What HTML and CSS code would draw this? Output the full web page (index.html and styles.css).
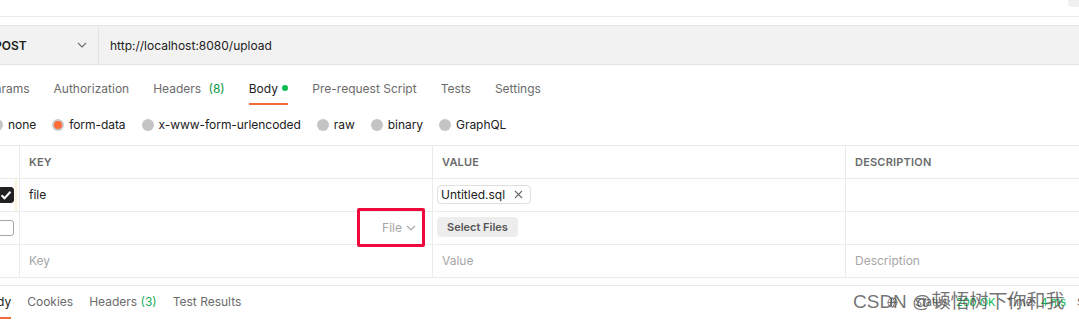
FILE: index.html
```html
<!DOCTYPE html>
<html>
<head>
<meta charset="utf-8">
<link rel="stylesheet" href="styles.css">
</head>
<body>
<div class="page">
  <div class="topbar"><span class="corner"></span></div>

  <div class="urlbar">
    <div class="method">
      <span class="method-name">POST</span>
      <svg class="chev" width="10" height="6" viewBox="0 0 10 6"><path d="M1 1l4 4 4-4" fill="none" stroke="#6b6b6b" stroke-width="1.1"/></svg>
    </div>
    <div class="url">http://localhost:8080/upload</div>
  </div>

  <div class="tabs">
    <span class="tab">Params</span>
    <span class="tab">Authorization</span>
    <span class="tab">Headers <span class="count">(8)</span></span>
    <span class="tab active">Body <span class="dot"></span></span>
    <span class="tab">Pre-request Script</span>
    <span class="tab">Tests</span>
    <span class="tab">Settings</span>
  </div>

  <div class="radios">
    <span class="opt"><span class="radio"></span>none</span>
    <span class="opt"><span class="radio on"></span>form-data</span>
    <span class="opt"><span class="radio"></span>x-www-form-urlencoded</span>
    <span class="opt"><span class="radio"></span>raw</span>
    <span class="opt"><span class="radio"></span>binary</span>
    <span class="opt"><span class="radio"></span>GraphQL</span>
  </div>

  <div class="table">
    <div class="row head">
      <div class="cell chk"></div>
      <div class="cell">KEY</div>
      <div class="cell">VALUE</div>
      <div class="cell last">DESCRIPTION</div>
    </div>
    <div class="row">
      <div class="cell chk marked"><span class="box checked"><svg width="12" height="10" viewBox="0 0 12 10"><path d="M1.5 5.2l3 3 6-6.4" fill="none" stroke="#fff" stroke-width="2"/></svg></span></div>
      <div class="cell text">file</div>
      <div class="cell"><span class="chip">Untitled.sql <svg class="x" width="9" height="9" viewBox="0 0 9 9"><path d="M1 1l7 7M8 1l-7 7" stroke="#6b6b6b" stroke-width="1.1"/></svg></span></div>
      <div class="cell last"></div>
    </div>
    <div class="row">
      <div class="cell chk"><span class="box"></span></div>
      <div class="cell typecell">
        <span class="type">File <svg width="10" height="6" viewBox="0 0 10 6"><path d="M1 1l4 4 4-4" fill="none" stroke="#a6a6a6" stroke-width="1.1"/></svg></span>
        <span class="annot"></span>
      </div>
      <div class="cell"><span class="btn">Select Files</span></div>
      <div class="cell last"></div>
    </div>
    <div class="row">
      <div class="cell chk"></div>
      <div class="cell ph">Key</div>
      <div class="cell ph">Value</div>
      <div class="cell ph last">Description</div>
    </div>
  </div>

  <div class="response">
    <div class="rtabs">
      <span class="rtab active">Body</span>
      <span class="rtab">Cookies</span>
      <span class="rtab">Headers <span class="count2">(3)</span></span>
      <span class="rtab">Test Results</span>
    </div>
    <div class="status">
      <svg class="globe" width="11" height="11" viewBox="0 0 12 12"><circle cx="6" cy="6" r="5" fill="none" stroke="#6b6b6b"/><path d="M1 6h10M6 1c-2.5 3-2.5 7 0 10M6 1c2.5 3 2.5 7 0 10" fill="none" stroke="#6b6b6b"/></svg>
      <span class="lbl">Status:</span><span class="ok">200 OK</span>
      <span class="lbl">Time:</span><span class="ok">4 ms</span>
      <span class="lbl">Size:</span>
    </div>
    <div class="watermark">CSDN @顿悟树下你和我</div>
  </div>
</div>
</body>
</html>
```

FILE: styles.css
```css
* { box-sizing: border-box; }
html, body { margin: 0; padding: 0; }
body {
  width: 1079px;
  height: 320px;
  overflow: hidden;
  background: #fff;
  font-family: Inter, "Noto Sans", sans-serif;
  font-size: 12px;
  color: #212121;
}
.page { width: 1079px; position: relative; overflow: hidden; height: 320px; }

.topbar {
  height: 17px;
  border-bottom: 1px solid #ebebeb;
  display: flex;
  justify-content: flex-end;
}
.corner {
  width: 14px;
  height: 7px;
  background: #f0f0f0;
  border-bottom-left-radius: 4px;
  margin-right: -3px;
}

.urlbar {
  margin-top: 8px;
  height: 40px;
  background: #f2f2f2;
  border-top: 1px solid #e3e3e3;
  border-bottom: 1px solid #e3e3e3;
  display: flex;
  align-items: stretch;
}
.method {
  width: 119px;
  margin-left: -20px;
  padding-left: 14px;
  padding-right: 11px;
  border-right: 1px solid #e3e3e3;
  display: flex;
  align-items: center;
  justify-content: space-between;
}
.method-name { font-weight: 600; font-size: 12px; }
.url { padding-left: 11px; display: flex; align-items: center; }

.tabs {
  height: 40px;
  display: flex;
  gap: 24px;
  margin-left: -13px;
}
.tab {
  padding-top: 16px;
  line-height: 16px;
  color: #6b6b6b;
  height: 40px;
  border-bottom: 2px solid transparent;
  white-space: nowrap;
}
.tab.active { color: #212121; border-bottom-color: #f26b3a; }
.count { color: #0a9a4a; margin-left: 4px; }
.dot {
  display: inline-block;
  width: 6px; height: 6px;
  border-radius: 50%;
  background: #0cbb52;
  margin-left: 1px;
  vertical-align: 2px;
}

.radios {
  height: 40px;
  display: flex;
  align-items: center;
  gap: 16px;
  margin-left: -9px;
  padding-bottom: 1px;
}
.opt { display: flex; align-items: center; gap: 5px; white-space: nowrap; letter-spacing: -0.05px; }
.radio {
  width: 12px; height: 12px;
  border-radius: 50%;
  background: #c4c4c4;
  display: inline-block;
  position: relative;
}
.radio.on { background: #c9c9c9; }
.radio.on::after {
  content: "";
  position: absolute;
  left: 2px; top: 2px;
  width: 8px; height: 8px;
  border-radius: 50%;
  background: #ff6c37;
}

.table { border-top: 1px solid #ebebeb; }
.row {
  display: grid;
  grid-template-columns: 41px 413px 413px 1fr;
  margin-left: -21px;
  height: 33px;
  border-bottom: 1px solid #ebebeb;
}
.cell {
  border-right: 1px solid #ebebeb;
  padding-left: 9px;
  padding-bottom: 1px;
  display: flex;
  align-items: center;
  position: relative;
}
.cell.last { border-right: none; width: 300px; }
.head .cell { font-size: 11px; font-weight: 600; color: #6b6b6b; letter-spacing: 0.2px; padding-bottom: 0; }
.cell.chk { justify-content: flex-end; padding-right: 5px; padding-left: 0; }
.cell.marked::after {
  content: "";
  position: absolute;
  right: 2px; top: 0; bottom: 0;
  width: 2px;
  background: #fcf3dc;
}
.box {
  width: 16px; height: 16px;
  border: 1px solid #a6a6a6;
  border-radius: 3px;
  display: flex;
  align-items: center;
  justify-content: center;
}
.box.checked { background: #212121; border-color: #212121; }
.chip {
  margin-left: -5px;
  height: 19px;
  border: 1px solid #e0e0e0;
  border-radius: 4px;
  padding: 0 7px 0 3px;
  display: inline-flex;
  align-items: center;
  gap: 9px;
  font-size: 12px;
}
.typecell { justify-content: flex-end; padding-right: 16px; }
.type { color: #a6a6a6; display: inline-flex; align-items: center; gap: 4px; font-size: 12px; }
.annot {
  position: absolute;
  right: 7px; top: -4px;
  width: 68px; height: 39px;
  border: 3px solid #f0093c;
  border-radius: 2px;
}
.btn {
  margin-left: -5px;
  margin-top: -2px;
  height: 20px;
  padding: 0 10px;
  background: #ededed;
  border-radius: 4px;
  font-size: 11px;
  font-weight: 600;
  color: #555;
  display: inline-flex;
  align-items: center;
}
.ph { color: #a6a6a6; }

.response {
  margin-top: 7px;
  border-top: 1px solid #e6e6e6;
  display: flex;
  position: relative;
}
.rtabs { display: flex; gap: 16px; margin-left: -18px; flex: 1; }
.rtab {
  padding-top: 8px;
  line-height: 16px;
  height: 33px;
  color: #6b6b6b;
  border-bottom: 2px solid transparent;
  white-space: nowrap;
}
.rtab.active { color: #212121; border-bottom-color: #f26b3a; }
.count2 { color: #1aaf5d; }
.status {
  width: 199px;
  flex: none;
  display: flex;
  align-items: center;
  height: 32px;
  gap: 5px;
  padding-left: 7px;
  font-size: 11px;
  white-space: nowrap;
  overflow: hidden;
}
.globe { margin-right: 12px; flex: none; }
.lbl { color: #6b6b6b; }
.ok { color: #0cbb52; margin-right: 6px; }
.watermark {
  position: absolute;
  left: 853px;
  top: 2px;
  font-family: "Liberation Sans", "Noto Sans CJK SC", sans-serif;
  font-size: 19px;
  line-height: 28px;
  color: rgba(70, 70, 70, 0.75);
  white-space: nowrap;
}
```
